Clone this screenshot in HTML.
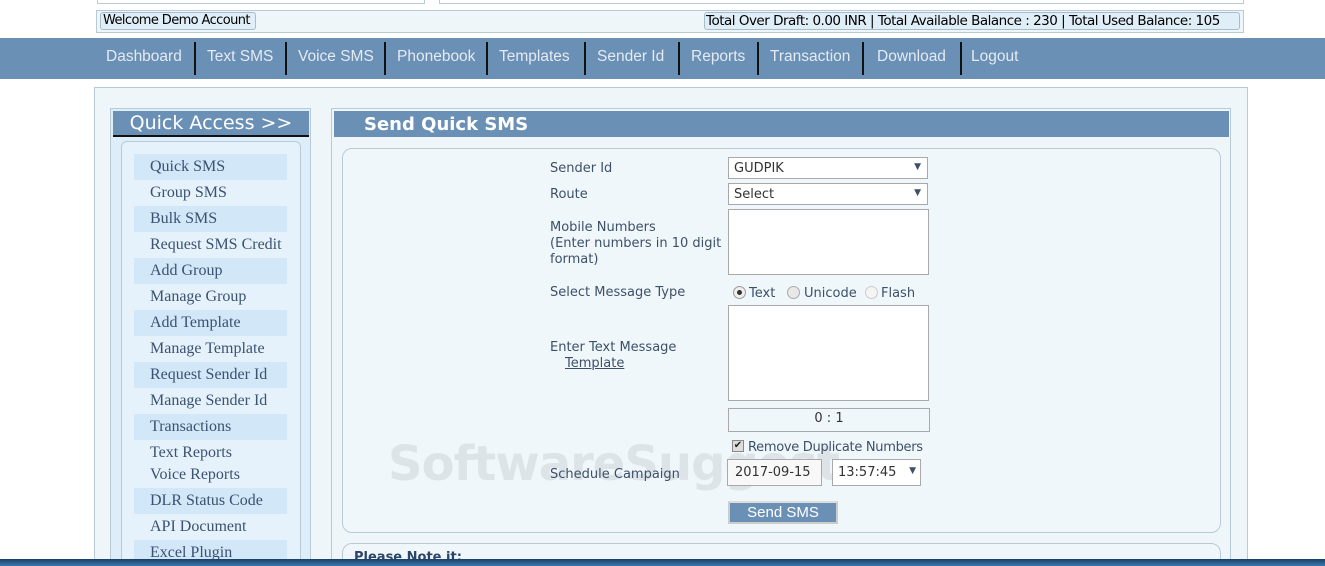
<!DOCTYPE html>
<html><head><meta charset="utf-8"><style>
*{margin:0;padding:0;box-sizing:border-box}
html,body{width:1325px;height:566px;overflow:hidden}
body{background:#fff;position:relative;font-family:"DejaVu Sans","Liberation Sans",sans-serif}
.a{position:absolute}
.nav{left:0;top:38px;width:1325px;height:41px;background:#6b90b6}
.ni{position:absolute;top:10px;color:#e4eaf1;font:15.5px "Liberation Sans",sans-serif}
.sep{position:absolute;top:4px;width:2px;height:33px;background:#111}
.li{position:absolute;left:134px;width:153px;height:26px;font:16px "Liberation Serif",serif;color:#3b5270;padding:4px 0 0 16px;white-space:nowrap}
.sh{background:#d2e7f8}
.lb{position:absolute;left:550px;font-size:13px;color:#3d5068;white-space:nowrap}
.inp{position:absolute;background:#fff;border:1px solid #a9a9a9;font-size:13px;color:#333}
</style></head><body>
<div class="a" style="left:97px;top:-2px;width:328px;height:6px;border:1px solid #b8cad6"></div>
<div class="a" style="left:439px;top:-2px;width:805px;height:6px;border:1px solid #b8cad6"></div>
<div class="a" style="left:96px;top:10px;width:1148px;height:23px;border:1px solid #b8cad6;background:#eef6fa"></div>
<div class="a" style="left:100px;top:12px;width:156px;height:18px;border:1px solid #a7bccd;border-radius:3px;background:#e0eef8;font-size:13px;color:#000;padding-left:2px;line-height:16px;white-space:nowrap;letter-spacing:-0.6px;overflow:hidden">Welcome Demo Account</div>
<div class="a" style="left:704px;top:12px;width:536px;height:18px;border:1px solid #a7bccd;border-radius:3px;background:#e0eef8;font-size:13.5px;color:#000;padding-left:1px;line-height:16px;white-space:nowrap;letter-spacing:-0.5px;overflow:hidden">Total Over Draft: 0.00 INR | Total Available Balance : 230 | Total Used Balance: 105</div>
<div class="a nav">
<span class="ni" style="left:106px">Dashboard</span><div class="sep" style="left:194px"></div>
<span class="ni" style="left:207px">Text SMS</span><div class="sep" style="left:285px"></div>
<span class="ni" style="left:298px">Voice SMS</span><div class="sep" style="left:384px"></div>
<span class="ni" style="left:397px">Phonebook</span><div class="sep" style="left:486px"></div>
<span class="ni" style="left:499px">Templates</span><div class="sep" style="left:584px"></div>
<span class="ni" style="left:597px">Sender Id</span><div class="sep" style="left:678px"></div>
<span class="ni" style="left:691px">Reports</span><div class="sep" style="left:757px"></div>
<span class="ni" style="left:770px">Transaction</span><div class="sep" style="left:862px"></div>
<span class="ni" style="left:877px">Download</span><div class="sep" style="left:960px"></div>
<span class="ni" style="left:971px">Logout</span>
</div>
<div class="a" style="left:94px;top:87px;width:1154px;height:480px;border:1px solid #b8cad6;background:#eef6fa"></div>
<div class="a" style="left:110px;top:108px;width:201px;height:460px;border:1px solid #b8cad6;background:#ddeefa"></div>
<div class="a" style="left:113px;top:111px;width:196px;height:26px;background:#6b90b6;border-bottom:2px solid #111;color:#fff;font:19px 'DejaVu Sans',sans-serif;text-align:center;line-height:24px;white-space:nowrap">Quick Access &gt;&gt;</div>
<div class="a" style="left:121px;top:141px;width:180px;height:430px;border:1px solid #b8cad6;border-radius:6px;background:#e6f2fb"></div>
<div class="li sh" style="top:154px">Quick SMS</div>
<div class="li" style="top:180px">Group SMS</div>
<div class="li sh" style="top:206px">Bulk SMS</div>
<div class="li" style="top:232px">Request SMS Credit</div>
<div class="li sh" style="top:258px">Add Group</div>
<div class="li" style="top:284px">Manage Group</div>
<div class="li sh" style="top:310px">Add Template</div>
<div class="li" style="top:336px">Manage Template</div>
<div class="li sh" style="top:362px">Request Sender Id</div>
<div class="li" style="top:388px">Manage Sender Id</div>
<div class="li sh" style="top:414px">Transactions</div>
<div class="li" style="top:440px;height:48px;line-height:22px;padding-top:2px">Text Reports<br>Voice Reports</div>
<div class="li sh" style="top:488px">DLR Status Code</div>
<div class="li" style="top:514px">API Document</div>
<div class="li sh" style="top:540px">Excel Plugin</div>
<div class="a" style="left:331px;top:108px;width:900px;height:460px;border:1px solid #b8cad6;background:#eef6fa"></div>
<div class="a" style="left:334px;top:111px;width:895px;height:26px;background:#6b90b6;color:#fff;font-size:18px;font-weight:bold;padding-left:30px;line-height:27px">Send Quick SMS</div>
<div class="a" style="left:342px;top:148px;width:879px;height:385px;border:1px solid #b8cad6;border-radius:10px;background:#f0f7fb"></div>
<div class="a" style="left:342px;top:543px;width:879px;height:30px;border:1px solid #b8cad6;border-radius:10px;background:#f0f7fb;font-size:13px;font-weight:bold;color:#2d4566;padding:6px 0 0 11px">Please Note it:</div>
<div class="a" style="left:388px;top:436px;font-size:48px;font-weight:bold;color:#dde4e8;font-family:'DejaVu Sans',sans-serif;letter-spacing:-1px;white-space:nowrap">SoftwareSuggest<span style="font-size:28px;font-weight:normal">.com</span></div>
<div class="lb" style="top:161px">Sender Id</div>
<div class="lb" style="top:187px">Route</div>
<div class="lb" style="top:220px;line-height:16px">Mobile Numbers<br>(Enter numbers in 10 digit<br>format)</div>
<div class="lb" style="top:285px">Select Message Type</div>
<div class="lb" style="top:340px;line-height:16px">Enter Text Message<br><span style="margin-left:15px;text-decoration:underline">Template</span></div>
<div class="lb" style="top:467px">Schedule Campaign</div>
<div class="inp" style="left:728px;top:157px;width:200px;height:22px;padding:3px 5px">GUDPIK<span style="position:absolute;right:6px;top:4px;font-size:9px;color:#3d5068">▼</span></div>
<div class="inp" style="left:728px;top:183px;width:200px;height:22px;padding:3px 5px">Select<span style="position:absolute;right:6px;top:4px;font-size:9px;color:#3d5068">▼</span></div>
<div class="inp" style="left:728px;top:209px;width:201px;height:66px"></div>
<div class="a" style="left:733px;top:286px;width:13px;height:13px;border:1px solid #999;border-radius:50%;background:#eee"><div style="margin:3px;width:5px;height:5px;border-radius:50%;background:#333"></div></div>
<div class="lb" style="left:749px;top:286px">Text</div>
<div class="a" style="left:787px;top:286px;width:13px;height:13px;border:1px solid #aaa;border-radius:50%;background:#e8e8e8"></div>
<div class="lb" style="left:804px;top:286px">Unicode</div>
<div class="a" style="left:865px;top:286px;width:13px;height:13px;border:1px solid #ccc;border-radius:50%;background:#f4f4f4"></div>
<div class="lb" style="left:881px;top:286px">Flash</div>
<div class="inp" style="left:728px;top:305px;width:201px;height:96px"></div>
<div class="a" style="left:728px;top:408px;width:202px;height:24px;border:1px solid #a9a9a9;background:#f0f7fb;text-align:center;font-size:13px;color:#333;line-height:20px">0 : 1</div>
<div class="a" style="left:732px;top:440px;width:12px;height:12px;border:1px solid #888;background:#ddd;font-size:10px;line-height:10px;text-align:center;color:#222">✔</div>
<div class="lb" style="left:748px;top:440px;letter-spacing:-0.3px">Remove Duplicate Numbers</div>
<div class="inp" style="left:727px;top:459px;width:95px;height:27px;background:#f8f8f8;padding:5px 0 0 7px">2017-09-15</div>
<div class="inp" style="left:832px;top:459px;width:89px;height:27px;padding:5px 0 0 5px">13:57:45<span style="position:absolute;right:4px;top:6px;font-size:9px;color:#3d5068">▼</span></div>
<div class="a" style="left:728px;top:501px;width:110px;height:23px;background:#6b90b6;border:2px solid #ccc;border-top-color:#ddd;color:#fff;font:15px 'Liberation Sans',sans-serif;text-align:center;line-height:19px">Send SMS</div>
<div class="a" style="left:0;top:559px;width:1325px;height:7px;background:linear-gradient(#1b3f66,#3a78b0)"></div>
</body></html>
